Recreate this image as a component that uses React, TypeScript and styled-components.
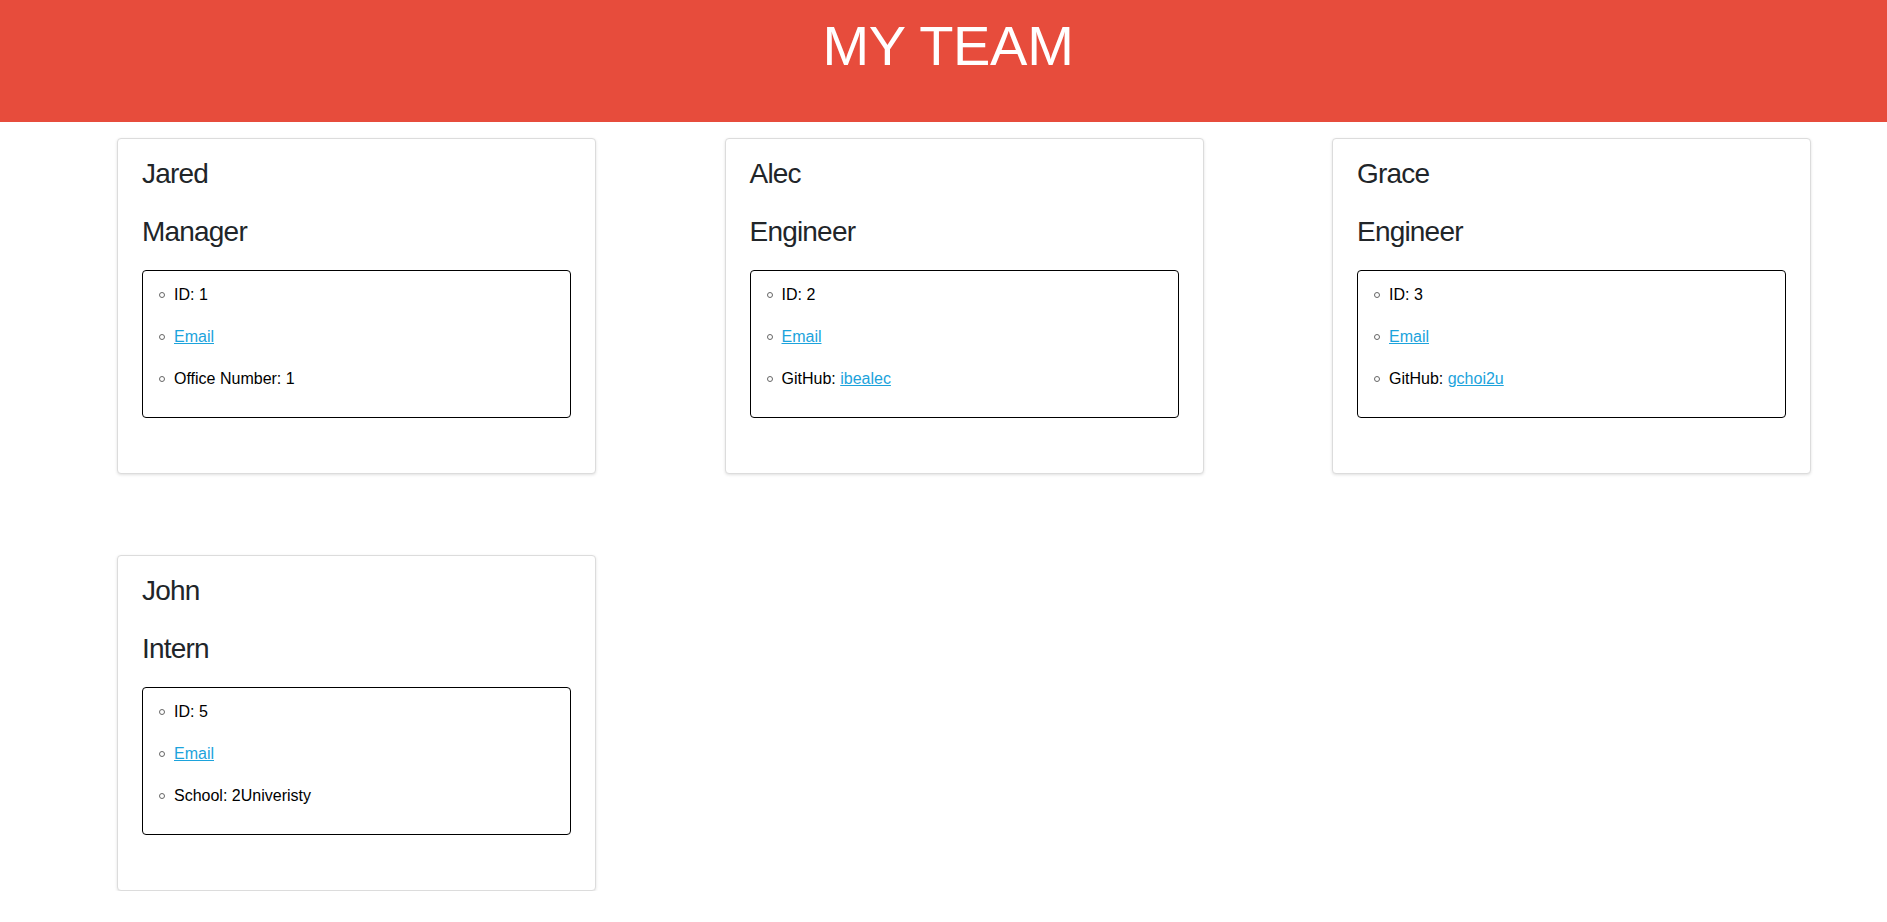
import styled, { createGlobalStyle } from 'styled-components';

type Member = {
    name: string;
    role: string;
    id: number;
    email: string;
    extraLabel: string;
    extraValue: string;
    extraIsLink?: boolean;
};

const team: Member[] = [
    { name: 'Jared', role: 'Manager', id: 1, email: 'jared@example.com', extraLabel: 'Office Number', extraValue: '1' },
    { name: 'Alec', role: 'Engineer', id: 2, email: 'alec@example.com', extraLabel: 'GitHub', extraValue: 'ibealec', extraIsLink: true },
    { name: 'Grace', role: 'Engineer', id: 3, email: 'grace@example.com', extraLabel: 'GitHub', extraValue: 'gchoi2u', extraIsLink: true },
    { name: 'John', role: 'Intern', id: 5, email: 'john@example.com', extraLabel: 'School', extraValue: '2Univeristy' },
];

const GlobalStyle = createGlobalStyle`
    body {
        margin: 0;
        background: #fff;
        font-family: "Liberation Sans", Arial, Helvetica, sans-serif;
        color: #212529;
    }
`;

export default function App() {
    return (
        <>
            <GlobalStyle />
            <Header>
                <Title>MY TEAM</Title>
            </Header>
            <CardGrid>
                {team.map((member) => (
                    <Card key={member.id}>
                        <CardHeading>{member.name}</CardHeading>
                        <CardHeading>{member.role}</CardHeading>
                        <InfoList>
                            <InfoItem>ID: {member.id}</InfoItem>
                            <InfoItem>
                                <StyledLink href={`mailto:${member.email}`}>Email</StyledLink>
                            </InfoItem>
                            <InfoItem>
                                {member.extraLabel}:{' '}
                                {member.extraIsLink ? (
                                    <StyledLink href={`https://github.com/${member.extraValue}`}>{member.extraValue}</StyledLink>
                                ) : (
                                    member.extraValue
                                )}
                            </InfoItem>
                        </InfoList>
                    </Card>
                ))}
            </CardGrid>
        </>
    );
}

const Header = styled.header`
    background: #e74c3c;
    height: 122px;
    box-sizing: border-box;
    padding: 12px 0 0 9px;
    text-align: center;
`;

const Title = styled.h1`
    margin: 0;
    font-size: 56px;
    line-height: 1.2;
    font-weight: 400;
    letter-spacing: -0.3px;
    color: #fff;
`;

const CardGrid = styled.main`
    display: grid;
    grid-template-columns: repeat(3, 479px);
    column-gap: 128.5px;
    row-gap: 81px;
    padding-left: 117px;
    margin-top: 16px;
`;

const Card = styled.section`
    box-sizing: border-box;
    height: 336px;
    padding: 18px 24px 55px;
    border: 1px solid #dcdcdc;
    border-radius: 4px;
    box-shadow: 0 1px 3px rgba(0, 0, 0, 0.12);
    background: #fff;
`;

const CardHeading = styled.h3`
    margin: 0 0 24px;
    font-size: 28px;
    line-height: 34px;
    font-weight: 400;
    letter-spacing: -0.8px;
    color: #212529;

    & + & {
        margin-bottom: 21px;
    }
`;

const InfoList = styled.ul`
    margin: 0;
    padding: 12px 0 8px 31px;
    border: 1px solid #000;
    border-radius: 4px;
    list-style: none;
`;

const InfoItem = styled.li`
    font-size: 16px;
    line-height: 24px;
    margin-bottom: 18px;
    color: #000;

    &::before {
        content: '';
        display: inline-block;
        box-sizing: border-box;
        width: 6px;
        height: 6px;
        margin: 0 9px 0 -15px;
        border: 1px solid #666;
        border-radius: 50%;
        vertical-align: 2px;
    }
`;

const StyledLink = styled.a`
    color: #1ca3dc;
    text-decoration: underline;
`;
